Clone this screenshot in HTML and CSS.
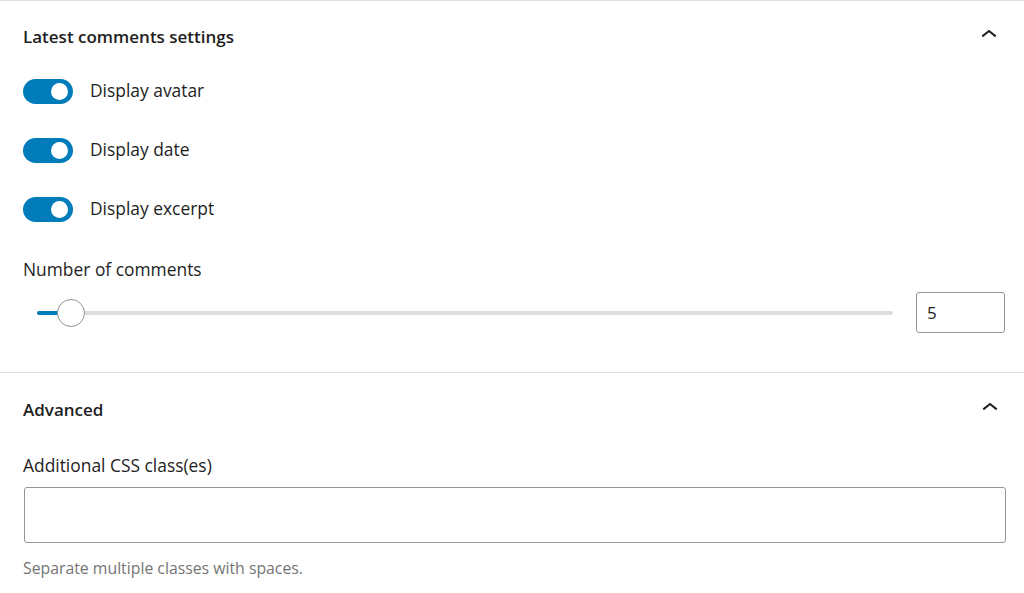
FILE: index.html
```html
<!DOCTYPE html>
<html>
<head>
<meta charset="utf-8">
<link rel="stylesheet" href="styles.css">
</head>
<body>
<div class="panel">
  <section class="section first">
    <div class="head">
      <h2 class="title">Latest comments settings</h2>
      <svg class="chev" viewBox="0 0 24 24"><path d="M6.5 12.4L12 8l5.5 4.4-.9 1.2L12 10l-4.6 3.6-.9-1.2z"/></svg>
    </div>
    <div class="toggles">
      <div class="toggle-row"><span class="toggle"><span class="knob"></span></span><span class="label">Display avatar</span></div>
      <div class="toggle-row"><span class="toggle"><span class="knob"></span></span><span class="label">Display date</span></div>
      <div class="toggle-row"><span class="toggle"><span class="knob"></span></span><span class="label">Display excerpt</span></div>
    </div>
    <div class="field-label num-label">Number of comments</div>
    <div class="range-row">
      <div class="range">
        <div class="track"></div>
        <div class="fill"></div>
        <div class="thumb"></div>
      </div>
      <div class="num-input">5</div>
    </div>
  </section>
  <section class="section second">
    <div class="head">
      <h2 class="title">Advanced</h2>
      <svg class="chev" viewBox="0 0 24 24"><path d="M6.5 12.4L12 8l5.5 4.4-.9 1.2L12 10l-4.6 3.6-.9-1.2z"/></svg>
    </div>
    <div class="field-label css-label">Additional CSS class(es)</div>
    <div class="text-input"></div>
    <p class="help">Separate multiple classes with spaces.</p>
  </section>
</div>
</body>
</html>
```

FILE: styles.css
```css
* { box-sizing: border-box; }
html, body { margin: 0; padding: 0; background: #fff; }
body {
  font-family: "Open Sans", "Noto Sans", sans-serif;
  color: #1e1e1e;
  width: 1024px;
  height: 593px;
  overflow: hidden;
}
.section {
  border-top: 1px solid #e0e0e0;
  padding: 16px 19px 39px 23px;
}
.second { padding-top: 17px; padding-right: 18px; }
.head {
  height: 40px;
  display: flex;
  align-items: center;
  justify-content: space-between;
}
.title {
  margin: 0 0 2px;
  font-size: 17px;
  font-weight: 600;
}
.chev {
  width: 32px;
  height: 32px;
  margin-right: 0;
  margin-top: -5px;
  fill: #1e1e1e;
}
.toggles {
  margin-top: 22px;
  display: flex;
  flex-direction: column;
  gap: 34px;
}
.toggle-row {
  height: 25px;
  display: flex;
  align-items: center;
  gap: 17px;
}
.toggle {
  width: 50px;
  height: 25px;
  border-radius: 13px;
  background: #007cba;
  display: flex;
  align-items: center;
  justify-content: flex-end;
  padding-right: 5px;
}
.knob {
  width: 17px;
  height: 17px;
  border-radius: 50%;
  background: #fff;
}
.label, .field-label {
  font-size: 17.4px;
  line-height: 24px;
}
.label { padding-bottom: 3px; }
.num-label { margin-top: 35px; }
.range-row {
  margin-top: 11px;
  display: flex;
  align-items: center;
}
.range {
  position: relative;
  flex: 1;
  height: 41px;
  margin-left: 14px;
  margin-right: 23px;
}
.track {
  position: absolute;
  left: 0; right: 0;
  top: 19px;
  height: 4px;
  border-radius: 2px;
  background: #dddddd;
}
.fill {
  position: absolute;
  left: 0;
  width: 22px;
  top: 19px;
  height: 4px;
  border-radius: 2px;
  background: #007cba;
}
.thumb {
  position: absolute;
  left: 20px;
  top: 7px;
  width: 28px;
  height: 28px;
  border-radius: 50%;
  background: #fff;
  border: 1px solid #949494;
}
.num-input {
  width: 89px;
  height: 41px;
  border: 1px solid #949494;
  border-radius: 3px;
  font-size: 17px;
  line-height: 39px;
  padding-left: 10px;
}
.css-label { margin-top: 23px; }
.text-input {
  margin-top: 10px;
  margin-left: 1px;
  height: 56px;
  border: 1px solid #949494;
  border-radius: 3px;
}
.help {
  margin: 15px 0 0;
  font-size: 15.8px;
  line-height: 20px;
  color: #757575;
}
```
